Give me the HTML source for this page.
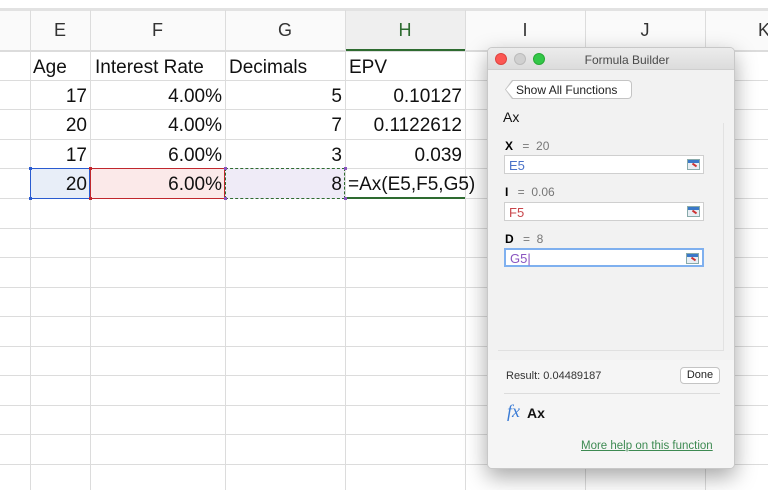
<!DOCTYPE html>
<html><head><style>
*{margin:0;padding:0;box-sizing:border-box}
body{width:768px;height:490px;overflow:hidden;background:#fff;position:relative;font-family:"Liberation Sans","DejaVu Sans",sans-serif}
.a{position:absolute}
.hl{position:absolute;left:0;width:768px;height:1px;background:#dcdcdc}
.vl{position:absolute;top:10px;height:480px;width:1px;background:#dcdcdc}
.hd{position:absolute;top:20px;font-size:18px;color:#333;text-align:center}
.c{position:absolute;font-size:19px;color:#111;white-space:nowrap}
.r{text-align:right}
.inp{position:absolute;left:504px;width:200px;height:19px;background:#fff;border:1px solid #cfcfcf;font-size:12px;padding:2px 4px}
.ic{position:absolute;right:3px;top:3px;width:13px;height:11px;border:1px solid #8aa;background:linear-gradient(#3a78c8 0 3px,#e8eef4 3px)}
.ic:after{content:"";position:absolute;left:4px;top:4px;width:5px;height:2px;background:#c33;transform:rotate(35deg)}
.lb{position:absolute;left:505px;font-size:12px;color:#777}
.lb b{color:#000;margin-right:6px}
</style></head><body>
<div class="a" style="left:0;top:8px;width:768px;height:3px;background:#e2e2e2"></div>
<div class="a" style="left:0;top:11px;width:768px;height:39px;background:#fafafa"></div>
<div class="a" style="left:345px;top:11px;width:120px;height:39px;background:#efefef"></div>
<div class="hl" style="top:50px;height:2px"></div>
<div class="a" style="left:345px;top:49px;width:120px;height:2px;background:#2e6b30"></div>
<div class="hl" style="top:80px"></div>
<div class="hl" style="top:109px"></div>
<div class="hl" style="top:139px"></div>
<div class="hl" style="top:168px"></div>
<div class="hl" style="top:198px"></div>
<div class="hl" style="top:228px"></div>
<div class="hl" style="top:257px"></div>
<div class="hl" style="top:287px"></div>
<div class="hl" style="top:316px"></div>
<div class="hl" style="top:346px"></div>
<div class="hl" style="top:375px"></div>
<div class="hl" style="top:405px"></div>
<div class="hl" style="top:434px"></div>
<div class="hl" style="top:464px"></div>
<div class="vl" style="left:30px"></div>
<div class="vl" style="left:90px"></div>
<div class="vl" style="left:225px"></div>
<div class="vl" style="left:345px"></div>
<div class="vl" style="left:465px"></div>
<div class="vl" style="left:585px"></div>
<div class="vl" style="left:705px"></div>
<div class="hd" style="left:30px;width:60px">E</div>
<div class="hd" style="left:90px;width:135px">F</div>
<div class="hd" style="left:225px;width:120px">G</div>
<div class="hd" style="left:345px;width:120px;color:#2e6b30">H</div>
<div class="hd" style="left:465px;width:120px">I</div>
<div class="hd" style="left:585px;width:120px">J</div>
<div class="hd" style="left:758px">K</div>
<div class="a" style="left:30px;top:168px;width:60px;height:31px;background:#e8eef8;border:1px solid #2a5bd0"></div>
<div class="a" style="left:90px;top:168px;width:135px;height:31px;background:#fbe9e9;border:1px solid #c0272d"></div>
<div class="a" style="left:225px;top:168px;width:120px;height:31px;background:#efebf7;border:1px dashed #2e6b30"></div>
<div class="a" style="left:345px;top:197px;width:120px;height:2px;background:#2e6b30"></div>
<div class="a" style="left:29px;top:167px;width:3px;height:3px;background:#2a5bd0"></div>
<div class="a" style="left:29px;top:197px;width:3px;height:3px;background:#2a5bd0"></div>
<div class="a" style="left:89px;top:167px;width:3px;height:3px;background:#c0272d"></div>
<div class="a" style="left:89px;top:197px;width:3px;height:3px;background:#c0272d"></div>
<div class="a" style="left:224px;top:167px;width:3px;height:3px;background:#8a55c0"></div>
<div class="a" style="left:224px;top:197px;width:3px;height:3px;background:#8a55c0"></div>
<div class="a" style="left:344px;top:167px;width:3px;height:3px;background:#8a55c0"></div>
<div class="a" style="left:344px;top:197px;width:3px;height:3px;background:#8a55c0"></div>
<div class="c" style="left:33px;top:57px">Age</div>
<div class="c" style="left:95px;top:57px">Interest Rate</div>
<div class="c" style="left:229px;top:57px">Decimals</div>
<div class="c" style="left:349px;top:57px">EPV</div>
<div class="c r" style="left:30px;width:57px;top:86px">17</div>
<div class="c r" style="left:90px;width:132px;top:86px">4.00%</div>
<div class="c r" style="left:225px;width:117px;top:86px">5</div>
<div class="c r" style="left:345px;width:117px;top:86px">0.10127</div>
<div class="c r" style="left:30px;width:57px;top:115px">20</div>
<div class="c r" style="left:90px;width:132px;top:115px">4.00%</div>
<div class="c r" style="left:225px;width:117px;top:115px">7</div>
<div class="c r" style="left:345px;width:117px;top:115px">0.1122612</div>
<div class="c r" style="left:30px;width:57px;top:145px">17</div>
<div class="c r" style="left:90px;width:132px;top:145px">6.00%</div>
<div class="c r" style="left:225px;width:117px;top:145px">3</div>
<div class="c r" style="left:345px;width:117px;top:145px">0.039</div>
<div class="c r" style="left:30px;width:57px;top:174px">20</div>
<div class="c r" style="left:90px;width:132px;top:174px">6.00%</div>
<div class="c r" style="left:225px;width:117px;top:174px">8</div>
<div class="c" style="left:348px;top:174px">=Ax(E5,F5,G5)</div>
<div class="a" style="left:487px;top:47px;width:248px;height:422px;background:#f2f2f2;border:1px solid #c8c8c8;border-radius:5px;box-shadow:0 8px 22px rgba(0,0,0,.35);overflow:hidden">
<div class="a" style="left:0;top:0;width:248px;height:22px;background:linear-gradient(#ececec,#dcdcdc);border-bottom:1px solid #cfcfcf"></div>
<div class="a" style="left:7px;top:5px;width:12px;height:12px;border-radius:50%;background:#fc5753;border:1px solid #de4440"></div>
<div class="a" style="left:26px;top:5px;width:12px;height:12px;border-radius:50%;background:#d0d0d0;border:1px solid #bbb"></div>
<div class="a" style="left:45px;top:5px;width:12px;height:12px;border-radius:50%;background:#33c748;border:1px solid #27aa35"></div>
<div class="a" style="left:0;top:5px;width:248px;text-align:center;font-size:12px;color:#4a4a4a;padding-left:30px">Formula Builder</div>
<div class="a" style="left:17px;top:32px;width:127px;height:19px;background:#c4c4c4;clip-path:polygon(0 50%,7px 0,100% 0,100% 100%,7px 100%);border-radius:0 4px 4px 0"></div>
<div class="a" style="left:18px;top:33px;width:125px;height:17px;background:#fff;clip-path:polygon(0 50%,7px 0,100% 0,100% 100%,7px 100%);border-radius:0 3px 3px 0;font-size:12px;color:#222;padding:2px 0 0 10px">Show All Functions</div>
<div class="a" style="left:15px;top:61px;font-size:14px;color:#111">Ax</div>
<div class="a" style="left:235px;top:75px;width:1px;height:228px;background:#e2e2e2"></div>
<div class="a" style="left:10px;top:302px;width:226px;height:1px;background:#e0e0e0"></div>
<div class="a" style="left:0;top:312px;width:248px;height:110px;background:#f5f5f5"></div>
<div class="a" style="left:18px;top:322px;font-size:11px;color:#333">Result: 0.04489187</div>
<div class="a" style="left:192px;top:319px;width:40px;height:17px;background:#fff;border:1px solid #c4c4c4;border-radius:4px;font-size:11px;text-align:center;padding-top:1px;color:#222">Done</div>
<div class="a" style="left:16px;top:345px;width:216px;height:1px;background:#dcdcdc"></div>
<div class="a" style="left:19px;top:353px;font-size:18px;color:#3a7bd5;font-family:'Liberation Serif',serif;font-style:italic">fx</div>
<div class="a" style="left:39px;top:357px;font-size:14px;font-weight:bold;color:#111">Ax</div>
<div class="a" style="left:93px;top:392px;font-size:11.5px;color:#3d8a52;text-decoration:underline">More help on this function</div>
</div>
<div class="lb" style="top:139px"><b>X</b> = &nbsp;20</div>
<div class="inp" style="top:155px;color:#4a72c8;font-size:13px">E5<span class="ic"></span></div>
<div class="lb" style="top:185px"><b>I</b> = &nbsp;0.06</div>
<div class="inp" style="top:202px;color:#c8454a;font-size:13px">F5<span class="ic"></span></div>
<div class="lb" style="top:232px"><b>D</b> = &nbsp;8</div>
<div class="inp" style="top:248px;color:#8a55c0;border:2px solid #7fb0ef;font-size:13px;padding-top:1px">G5|<span class="ic"></span></div>
</body></html>
